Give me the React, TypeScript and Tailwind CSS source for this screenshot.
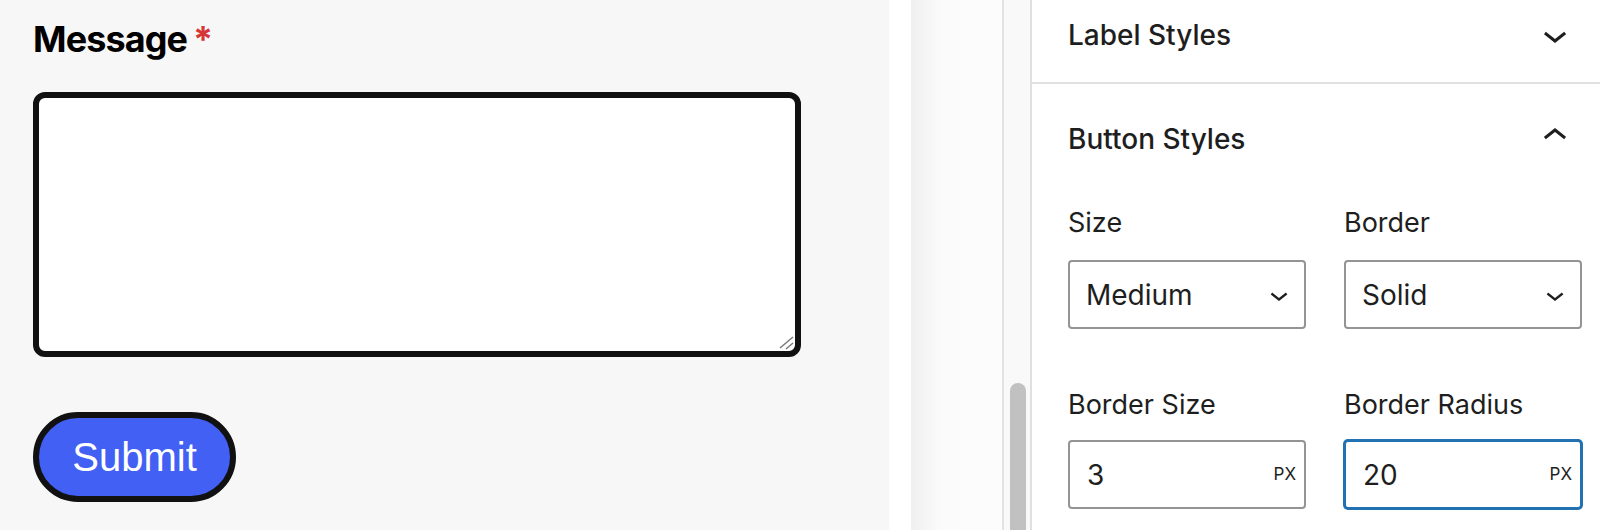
import React from "react";

function ChevronDown({ size }: { size: number }) {
  return (
    <svg width={size} height={size} viewBox="0 0 24 24" className="shrink-0">
      <path d="M17.5 11.6L12 16l-5.5-4.4.9-1.2L12 14l4.6-3.6 1 1.2z" fill="#1e1e1e" />
    </svg>
  );
}

function ChevronUp({ size }: { size: number }) {
  return (
    <svg width={size} height={size} viewBox="0 0 24 24" className="shrink-0">
      <path d="M6.5 12.4L12 8l5.5 4.4-.9 1.2L12 10l-4.6 3.6-1-1.2z" fill="#1e1e1e" />
    </svg>
  );
}

function SelectBox({ value }: { value: string }) {
  return (
    <div className="flex h-[69px] w-[238px] items-center justify-between rounded-[4px] border-2 border-[#949494] bg-white pl-[16px] pr-[7px]">
      <span className="text-[28px] leading-[28px] text-[#1e1e1e]">{value}</span>
      <ChevronDown size={36} />
    </div>
  );
}

function UnitInput({ value, focused }: { value: string; focused?: boolean }) {
  return (
    <div
      className={
        focused
          ? "flex h-[69px] w-[238px] items-center justify-between rounded-[4px] border-2 border-[#2271b1] bg-white pl-[17px] pr-[8px] shadow-[0_0_0_1px_#2271b1]"
          : "flex h-[69px] w-[238px] items-center justify-between rounded-[4px] border-2 border-[#949494] bg-white pl-[17px] pr-[8px]"
      }
    >
      <span className="text-[28px] leading-[28px] text-[#1e1e1e]">{value}</span>
      <span className="text-[17px] leading-[17px] text-[#1e1e1e]">PX</span>
    </div>
  );
}

export default function App() {
  return (
    <div
      className="flex h-[530px] w-[1600px] overflow-hidden bg-white"
      style={{ fontFamily: "Inter, 'Noto Sans', sans-serif" }}
    >
      {/* Form preview */}
      <div className="flex w-[889px] shrink-0 flex-col items-start bg-[#f7f7f7] pl-[33px] pt-[21px]">
        <div className="text-[36px] font-bold leading-[36px] tracking-[-0.9px] text-black">
          Message<span className="ml-[6px] text-[#d63638]">*</span>
        </div>
        <div className="relative mt-[35px] h-[265px] w-[768px] rounded-[12px] border-[6px] border-[#111111] bg-white">
          <svg
            width="16"
            height="16"
            viewBox="0 0 16 16"
            className="absolute bottom-0 right-0"
          >
            <line x1="1" y1="13" x2="14" y2="2" stroke="#7a7a7a" strokeWidth="1.5" />
            <line x1="7" y1="14" x2="14" y2="8" stroke="#7a7a7a" strokeWidth="1.5" />
          </svg>
        </div>
        <button
          className="mt-[55px] flex h-[90px] w-[203px] items-center justify-center rounded-full border-[6px] border-[#111111] bg-[#4360f5] text-[40px] leading-[40px] text-white"
          style={{ fontFamily: "'Liberation Sans', Arial, sans-serif" }}
        >
          Submit
        </button>
      </div>

      {/* gap / canvas edge */}
      <div className="w-[22px] shrink-0 bg-white" />
      <div className="w-[91px] shrink-0 bg-[linear-gradient(to_right,#efefef_0px,#f6f6f6_18px,#fbfbfb_30px,#fcfcfc_100%)]" />
      <div className="w-[2px] shrink-0 bg-[#e2e2e2]" />
      <div className="flex w-[26px] shrink-0 flex-col bg-[#f9f9f9] pl-[6px] pt-[383px]">
        <div className="w-[16px] flex-1 rounded-t-full bg-[#c1c1c1]" />
      </div>

      {/* Sidebar */}
      <div className="flex flex-1 flex-col border-l-2 border-[#e0e0e0] bg-white text-[#1e1e1e]">
        <div className="flex h-[84px] items-start justify-between border-b-2 border-[#e0e0e0] pl-[36px] pr-[21px] pt-[11px]">
          <span className="mt-[10px] text-[28px] font-medium leading-[28px]">Label Styles</span>
          <ChevronDown size={48} />
        </div>
        <div className="flex items-start justify-between pl-[36px] pr-[21px] pt-[28px]">
          <span className="mt-[13px] text-[28px] font-medium leading-[28px]">Button Styles</span>
          <ChevronUp size={48} />
        </div>
        <div className="mt-[49px] grid grid-cols-[238px_238px] gap-x-[38px] pl-[36px]">
          <div className="flex flex-col">
            <span className="text-[27px] leading-[27px]">Size</span>
            <div className="mt-[24px]">
              <SelectBox value="Medium" />
            </div>
          </div>
          <div className="flex flex-col">
            <span className="text-[27px] leading-[27px]">Border</span>
            <div className="mt-[24px]">
              <SelectBox value="Solid" />
            </div>
          </div>
          <div className="mt-[62px] flex flex-col">
            <span className="text-[27px] leading-[27px]">Border Size</span>
            <div className="mt-[22px]">
              <UnitInput value="3" />
            </div>
          </div>
          <div className="mt-[62px] flex flex-col">
            <span className="text-[27px] leading-[27px]">Border Radius</span>
            <div className="mt-[22px]">
              <UnitInput value="20" focused />
            </div>
          </div>
        </div>
      </div>
    </div>
  );
}
